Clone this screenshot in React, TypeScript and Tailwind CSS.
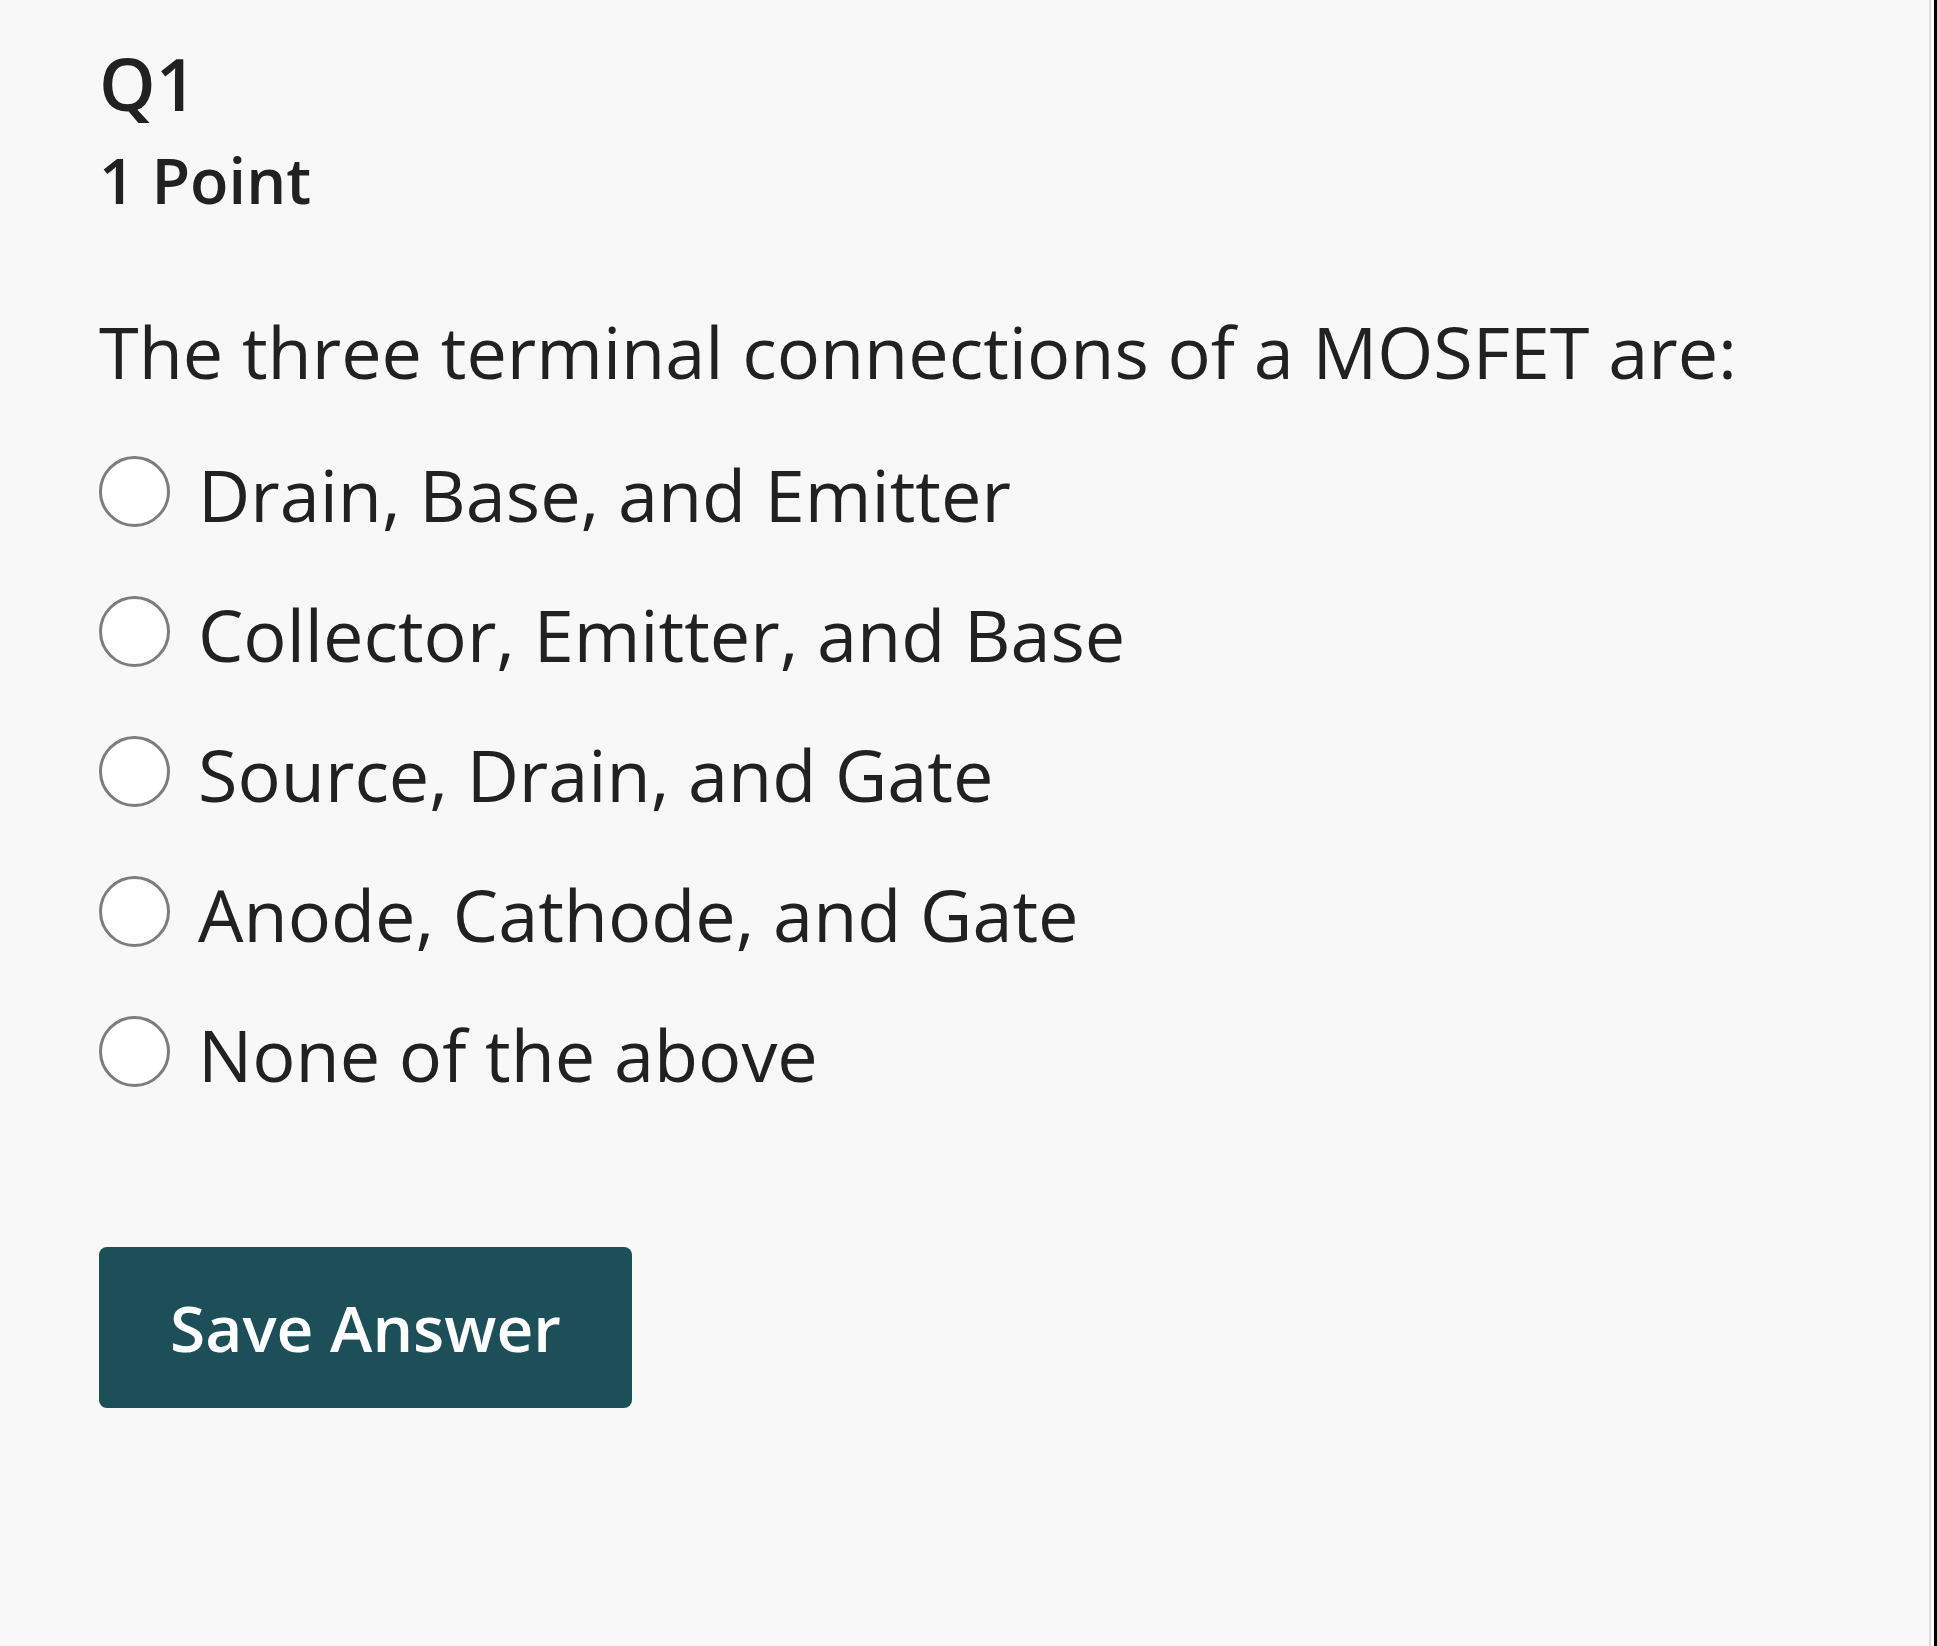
import { useState } from "react";

const options = [
  "Drain, Base, and Emitter",
  "Collector, Emitter, and Base",
  "Source, Drain, and Gate",
  "Anode, Cathode, and Gate",
  "None of the above",
];

export default function App() {
  const [selected, setSelected] = useState<number | null>(null);

  return (
    <div className="flex min-h-screen bg-[#f8f8f8] font-['Open_Sans',sans-serif] text-[#212121]">
      <div className="flex-1 pl-[99px] pt-[43px]">
        <h1 className="text-[72px] font-semibold leading-[80px]">Q1</h1>
        <div className="mt-[21px] text-[63px] font-semibold leading-[72px]">1 Point</div>

        <p className="mt-[95px] text-[72px] leading-[80px]">
          The three terminal connections of a MOSFET are:
        </p>

        <div className="mt-[63px] flex flex-col gap-[60px]">
          {options.map((opt, i) => (
            <label key={opt} className="flex cursor-pointer items-start gap-[28px]">
              <span
                onClick={() => setSelected(i)}
                className="mt-[2px] flex h-[71px] w-[71px] shrink-0 items-center justify-center rounded-full border-[3px] border-[#7d7d7d] bg-white"
              >
                {selected === i && <span className="h-[39px] w-[39px] rounded-full bg-[#1c4f58]" />}
              </span>
              <span className="text-[72px] leading-[80px]" onClick={() => setSelected(i)}>
                {opt}
              </span>
            </label>
          ))}
        </div>

        <button
          type="button"
          className="mt-[153px] flex h-[161px] w-[533px] items-center justify-center rounded-[8px] bg-[#1c4f58] text-[64px] font-semibold text-white"
        >
          Save Answer
        </button>
      </div>

      <div className="w-[2px] bg-[#dcdcdc]" />
      <div className="w-[3px] bg-[#fbfbfb]" />
      <div className="w-[3px] bg-black" />
    </div>
  );
}
